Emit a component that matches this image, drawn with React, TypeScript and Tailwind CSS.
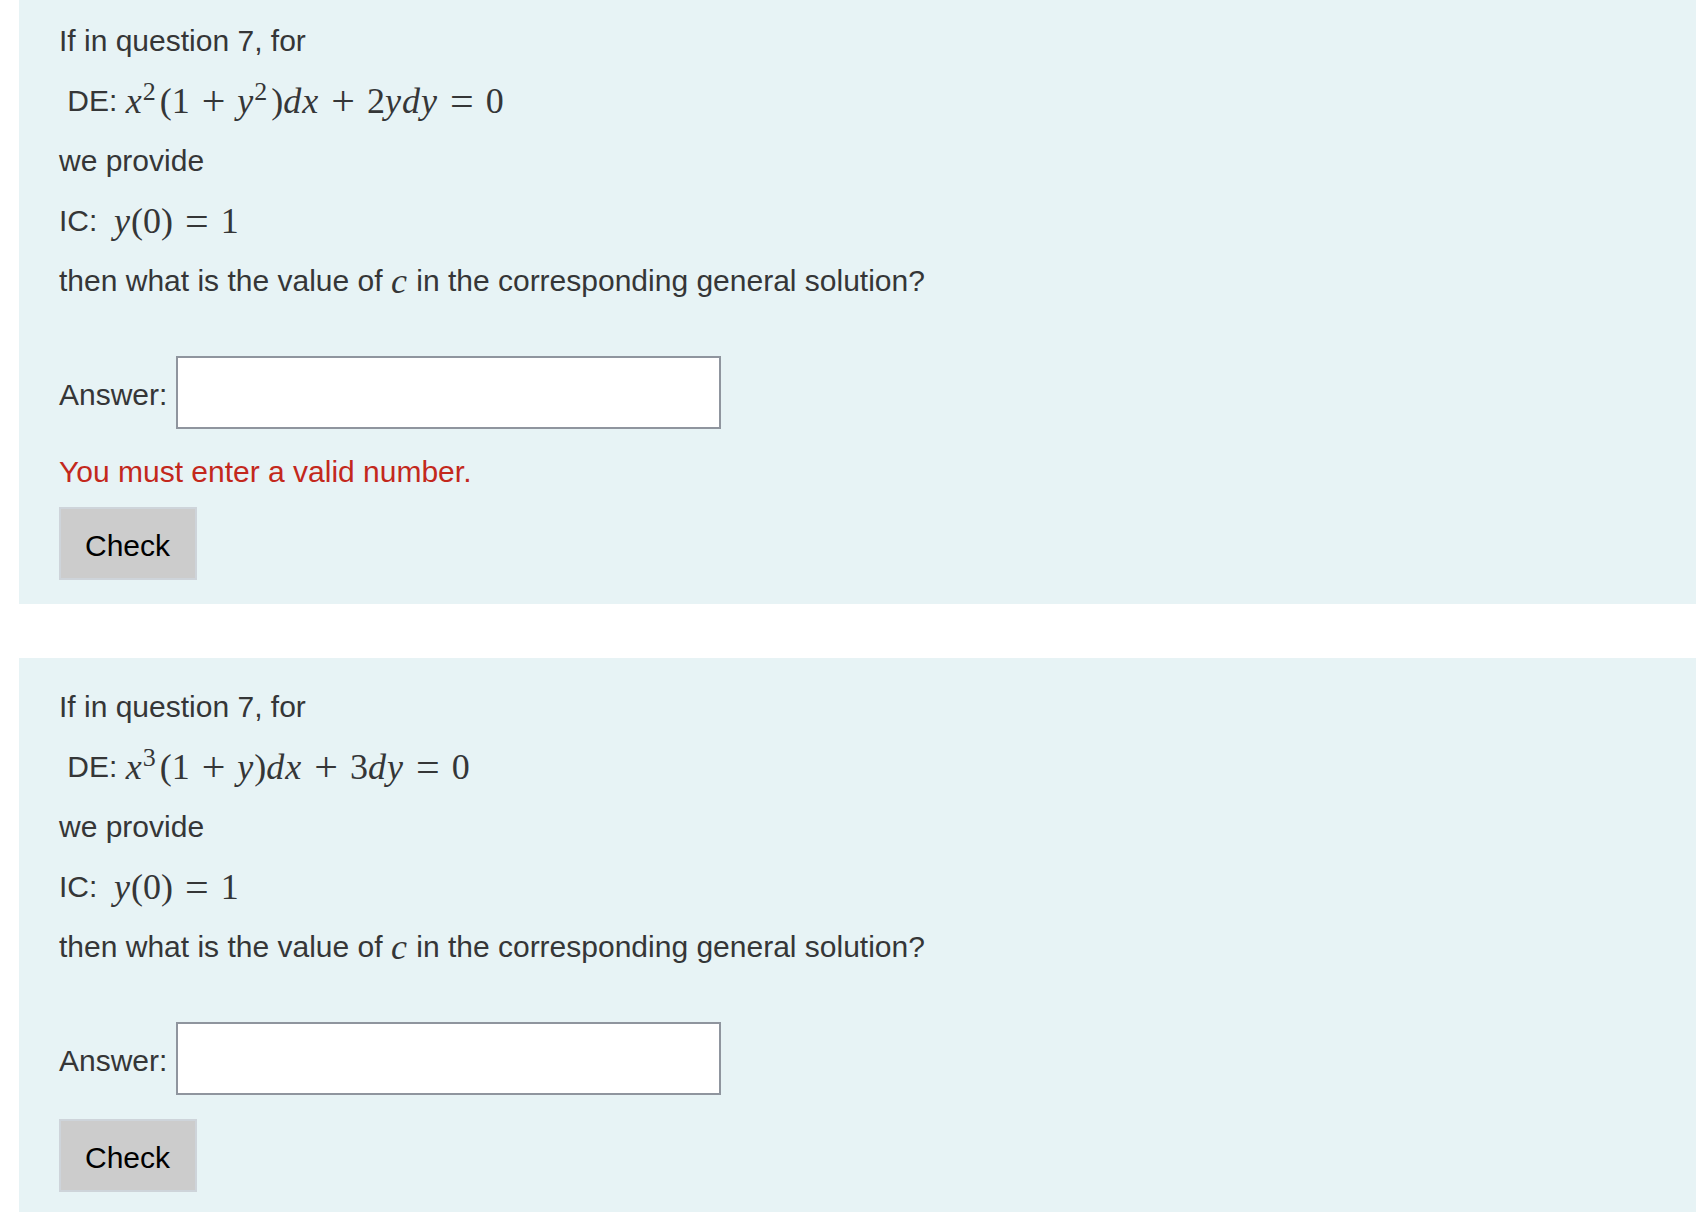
import type { ReactNode } from "react";
import clsx from "clsx";

type Question = {
  id: string;
  equation: ReactNode;
  error?: string;
};

function MathText({ children }: { children: ReactNode }) {
  return (
    <span className="align-[-2px] font-['Liberation_Serif',serif] text-[36px] leading-none whitespace-nowrap">
      {children}
    </span>
  );
}

function Var({ children }: { children: string }) {
  return <i className="mr-px">{children}</i>;
}

// Binary operators and relations get space on both sides
function Op({ children }: { children: string }) {
  return <span className="mx-3 align-[-2px] text-[42px] leading-[36px]">{children}</span>;
}

function Sup({ children }: { children: string }) {
  return <sup className="mr-1 text-[26px] leading-none">{children}</sup>;
}

const QUESTIONS: Question[] = [
  {
    id: "q8",
    equation: (
      <MathText>
        <Var>x</Var>
        <Sup>2</Sup>(1<Op>+</Op>
        <Var>y</Var>
        <Sup>2</Sup>)<Var>d</Var>
        <Var>x</Var>
        <Op>+</Op>2<Var>y</Var>
        <Var>d</Var>
        <Var>y</Var>
        <Op>=</Op>0
      </MathText>
    ),
    error: "You must enter a valid number.",
  },
  {
    id: "q9",
    equation: (
      <MathText>
        <Var>x</Var>
        <Sup>3</Sup>(1<Op>+</Op>
        <Var>y</Var>)<Var>d</Var>
        <Var>x</Var>
        <Op>+</Op>3<Var>d</Var>
        <Var>y</Var>
        <Op>=</Op>0
      </MathText>
    ),
  },
];

function QuestionPanel({ question, first }: { question: Question; first: boolean }) {
  const { id, equation, error } = question;

  return (
    <form
      className={clsx("bg-[#e7f3f5] px-10", first ? "pt-[18px] pb-6" : "grow pt-[26px] pb-5")}
      onSubmit={(e) => e.preventDefault()}
    >
      <div className="flex flex-col gap-[15px]">
        <p>If in question 7, for</p>
        <p>&nbsp;DE: {equation}</p>
        <p>we provide</p>
        <p>
          IC:&nbsp;&nbsp;
          <MathText>
            <Var>y</Var>(0)<Op>=</Op>1
          </MathText>
        </p>
        <p>
          then what is the value of{" "}
          <MathText>
            <Var>c</Var>
          </MathText>{" "}
          in the corresponding general solution?
        </p>
      </div>

      <div className="mt-[53px] flex items-center gap-[9px]">
        <label htmlFor={id} className="pt-[3px]">
          Answer:
        </label>
        <input
          id={id}
          type="text"
          className="h-[73px] w-[545px] border-2 border-[#8f959e] bg-white px-4"
        />
      </div>

      {error && <p className="mt-5 text-[#c3281c]">{error}</p>}

      <button
        type="submit"
        className={clsx(
          "block h-[73px] border-2 border-[#ced4da] bg-[#cccccc] pt-[3px] pr-[25px] pl-6 text-black",
          error ? "mt-[13px]" : "mt-6",
        )}
      >
        Check
      </button>
    </form>
  );
}

export default function App() {
  return (
    <main className="flex min-h-screen flex-col gap-[54px] bg-white pl-[19px] font-['Liberation_Sans',Arial,sans-serif] text-[30px] leading-[45px] text-[#353637]">
      {QUESTIONS.map((q, i) => (
        <QuestionPanel key={q.id} question={q} first={i === 0} />
      ))}
    </main>
  );
}
